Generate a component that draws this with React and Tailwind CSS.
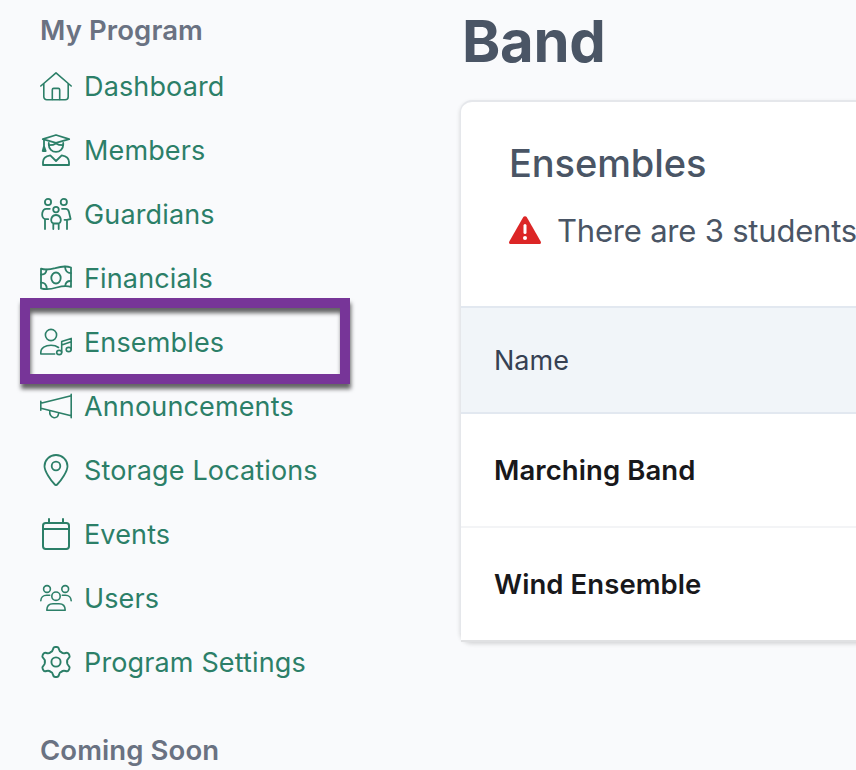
const Icon = ({ strokeWidth = 2, children }) => (
  <svg
    viewBox="0 0 32 32"
    className="w-8 h-8 shrink-0"
    fill="none"
    stroke="currentColor"
    strokeWidth={strokeWidth}
    strokeLinecap="round"
    strokeLinejoin="round">
    {children}
  </svg>
);

const HomeIcon = () => (
  <Icon strokeWidth={1.6}>
    <path d="M.8 16 16 2.8 31.2 16" />
    <path d="M3.8 14v12.7a3 3 0 0 0 3 3h18.4a3 3 0 0 0 3-3V14" />
    <path d="M12.3 29.5V19.8a1.4 1.4 0 0 1 1.4-1.4h4.6a1.4 1.4 0 0 1 1.4 1.4v9.7" />
  </Icon>
);

const MembersIcon = () => (
  <Icon strokeWidth={1.8}>
    <path d="M2.8 5.2 16 1l13.2 4.2L16 8.8z" />
    <path d="M4 5.7v6.5M4 12.2 2.7 17h3z" />
    <path d="M8.8 9v1.7a7.2 7.2 0 0 0 14.4 0V9" />
    <path d="M9 11.2c2.5 0 5-.4 7-1.800 2 1.400 4.500 1.800 7 1.800" />
    <path d="M10.300 21.300C6 22 3 24 3 28v3h26v-3c0-4-3-6-7.300-6.700L16 27z" />
  </Icon>
);

const GuardiansIcon = () => (
  <Icon strokeWidth={1.8}>
    <circle cx="8" cy="4" r="3.1" />
    <circle cx="23.8" cy="4" r="3.1" />
    <circle cx="16" cy="11.6" r="2.8" />
    <path d="M9.8 10.8H6.2C3.8 10.8 2.8 12.5 2.3 15c-.5 2.8 0 5 2.700 6.200V31M5 21.200h3.200" />
    <path d="M22 10.800h3.800c1.800 0 2.600 1 3.100 3l1.700 7.200-3.600.8V31M24.500 21.800H27" />
    <path d="M13.300 25.500c-2.500-1-2.500-4-1.500-6 .9-1.800 2.400-2.500 4.200-2.500s3.300.7 4.200 2.500c1 2 1 5-1.500 6zM13.300 25.500V31M18.700 25.500V31" />
  </Icon>
);

const FinancialsIcon = () => (
  <Icon strokeWidth={1.8}>
    <path d="M1 6.700c5 1.700 9.300.8 14.300-.6 5.200-1.600 10.500-2.500 15.700-.6v19.400c-5-1.700-9.300-.8-14.300.6C11.500 27.100 6.200 28 1 26.300z" />
    <ellipse cx="16" cy="16" rx="4.700" ry="5.500" />
    <path d="M1 12.500c3.300.2 5.300-1.500 5.500-4.800M1 20.700c3.500-.2 5.500 2.300 5.800 6M25 4.700c.3 3.800 2.300 6.300 6 6.500M31 19c-3.300-.2-5.500 1.500-5.800 5" />
  </Icon>
);

const EnsemblesIcon = () => (
  <Icon strokeWidth={1.6}>
    <circle cx="11" cy="9" r="5.6" />
    <path d="M14.700 28H.8v-1.500c0-4.500 4.400-7.200 10.200-7.200 3 0 5.500.7 7.500 2.200" />
    <path d="M21.700 26.300V15.600l9.500-3.200v11M21.700 19l9.500-3.200" />
    <ellipse cx="19.200" cy="26.500" rx="2.500" ry="2.100" />
    <ellipse cx="28.700" cy="23.500" rx="2.500" ry="2.100" />
  </Icon>
);

const AnnouncementsIcon = () => (
  <Icon strokeWidth={1.6}>
    <path d="M.8 11.300v9M31.200 4.300v23.400M.8 13.300 31.200 5.700M.8 18.300l30.400 7.500" />
    <path d="M9.800 20.800c-.5 3.500 1.200 6.500 4.200 6.900 2.500.2 4.200-1.500 4.600-4.200" />
  </Icon>
);

const LocationIcon = () => (
  <Icon strokeWidth={1.8}>
    <path d="M16 1c6.500 0 11.500 5 11.500 11.200 0 5-6.300 14.200-10.300 18.300a1.700 1.700 0 0 1-2.400 0C10.800 26.400 4.500 17.200 4.500 12.200 4.500 6 9.500 1 16 1z" />
    <circle cx="16" cy="12" r="4.3" />
  </Icon>
);

const EventsIcon = () => (
  <Icon>
    <rect x="3" y="5" width="26" height="26" rx="2.7" />
    <path d="M3 11h26M9 1v4M23 1v4" />
  </Icon>
);

const UsersIcon = () => (
  <Icon strokeWidth={1.6}>
    <circle cx="7" cy="7" r="3.4" />
    <circle cx="25.2" cy="7" r="3.4" />
    <circle cx="16" cy="14.2" r="4.2" />
    <path d="M.8 18.800c0-3.500 2.500-5.500 5.700-5.500h3.200M31.200 18.800c0-3.500-2.500-5.500-5.700-5.500h-3.200" />
    <path d="M6.800 28.300c0-4.500 2.500-6.600 6.200-6.600h6c3.700 0 6.200 2.100 6.200 6.600z" />
  </Icon>
);

const SettingsIcon = () => (
  <Icon strokeWidth={1.9}>
    {[0, 60, 120, 180, 240, 300].map((deg) => (
      <path
        key={deg}
        transform={`rotate(${deg} 16 16)`}
        d="M10.400 6.300c1.500-.4 2.300-1.500 2.600-3.100C13.300 1.700 14 1 15.200 1h1.600c1.200 0 1.900.7 2.200 2.200.3 1.600 1.100 2.700 2.600 3.100"
      />
    ))}
    <circle cx="16" cy="16" r="4.6" />
  </Icon>
);

const WarningIcon = () => (
  <svg viewBox="0 0 32 32" className="w-8 h-8 shrink-0">
    <path
      d="M14.300 3.100a2 2 0 0 1 3.400 0l14 24.300c.7 1.300 0 2.600-1.500 2.600H1.800C.3 30-.4 28.700.3 27.400z"
      fill="#dc2626"
    />
    <path d="M16 11.500v7" stroke="#fff" strokeWidth="3" strokeLinecap="round" />
    <circle cx="16" cy="24" r="2" fill="#fff" />
  </svg>
);

const links = [
  { name: "Dashboard", icon: HomeIcon },
  { name: "Members", icon: MembersIcon },
  { name: "Guardians", icon: GuardiansIcon },
  { name: "Financials", icon: FinancialsIcon },
  { name: "Ensembles", icon: EnsemblesIcon, highlighted: true },
  { name: "Announcements", icon: AnnouncementsIcon },
  { name: "Storage Locations", icon: LocationIcon },
  { name: "Events", icon: EventsIcon },
  { name: "Users", icon: UsersIcon },
  { name: "Program Settings", icon: SettingsIcon },
];

const ensembles = ["Marching Band", "Wind Ensemble"];

const App = () => {
  return (
    <div className="flex h-[770px] overflow-hidden bg-[#f9fafc] font-['Inter',sans-serif]">
      <nav className="w-[460px] shrink-0 pl-10 pt-2.5">
        <h2 className="text-[27.5px] leading-10 tracking-[0.1px] font-semibold text-gray-500">
          My Program
        </h2>
        <ul className="pt-1">
          {links.map(({ name, icon: LinkIcon, highlighted }) => (
            <li
              key={name}
              className="relative flex items-center gap-3 h-16 text-[27px] tracking-[0.14px] text-[#2c7f68]">
              <LinkIcon />
              <span className="pt-0.5 whitespace-nowrap">{name}</span>
              {highlighted && (
                <div className="absolute z-10 -left-5 -top-3 w-[330px] h-[86px] border-[10px] border-[#773598] drop-shadow-[1px_5px_2px_rgba(0,0,0,0.6)]" />
              )}
            </li>
          ))}
        </ul>
        <h2 className="pt-9 text-[27.5px] leading-10 tracking-[0.1px] font-semibold text-gray-500">
          Coming Soon
        </h2>
      </nav>

      <main className="w-[600px] shrink-0 pt-1">
        <h1 className="pl-0.5 text-[58px] leading-[74px] tracking-[-0.3px] font-bold text-gray-600">
          Band
        </h1>
        <div className="mt-[22px] h-[542px] rounded-xl border-l border-t-2 border-[#e5e7eb] bg-white shadow-[0_2px_4px_rgba(0,0,0,0.15)]">
          <div className="h-[204px] pt-[35px] pl-12">
            <h2 className="text-[38px] leading-[52px] tracking-[-0.1px] font-medium text-gray-600">
              Ensembles
            </h2>
            <div className="flex items-start gap-4 pt-[25px] text-[31px] leading-[34px] tracking-[-0.2px] text-gray-600">
              <WarningIcon />
              <p className="whitespace-nowrap">There are 3 students</p>
            </div>
          </div>
          <table className="w-full text-left text-[27px]">
            <thead>
              <tr className="h-[106px] border-y-2 border-slate-200 bg-slate-100">
                <th className="pl-[33px] pt-0.5 font-normal text-gray-700">
                  Name
                </th>
              </tr>
            </thead>
            <tbody>
              {ensembles.map((name) => (
                <tr
                  key={name}
                  className="h-[114px] border-b-2 border-gray-100 last:border-[#e0e1e3] bg-white">
                  <td className="pl-[33px] pt-0.5 text-[27.5px] tracking-[0.08px] font-semibold text-[#18181b]">
                    {name}
                  </td>
                </tr>
              ))}
            </tbody>
          </table>
        </div>
      </main>
    </div>
  );
};

export default App;
